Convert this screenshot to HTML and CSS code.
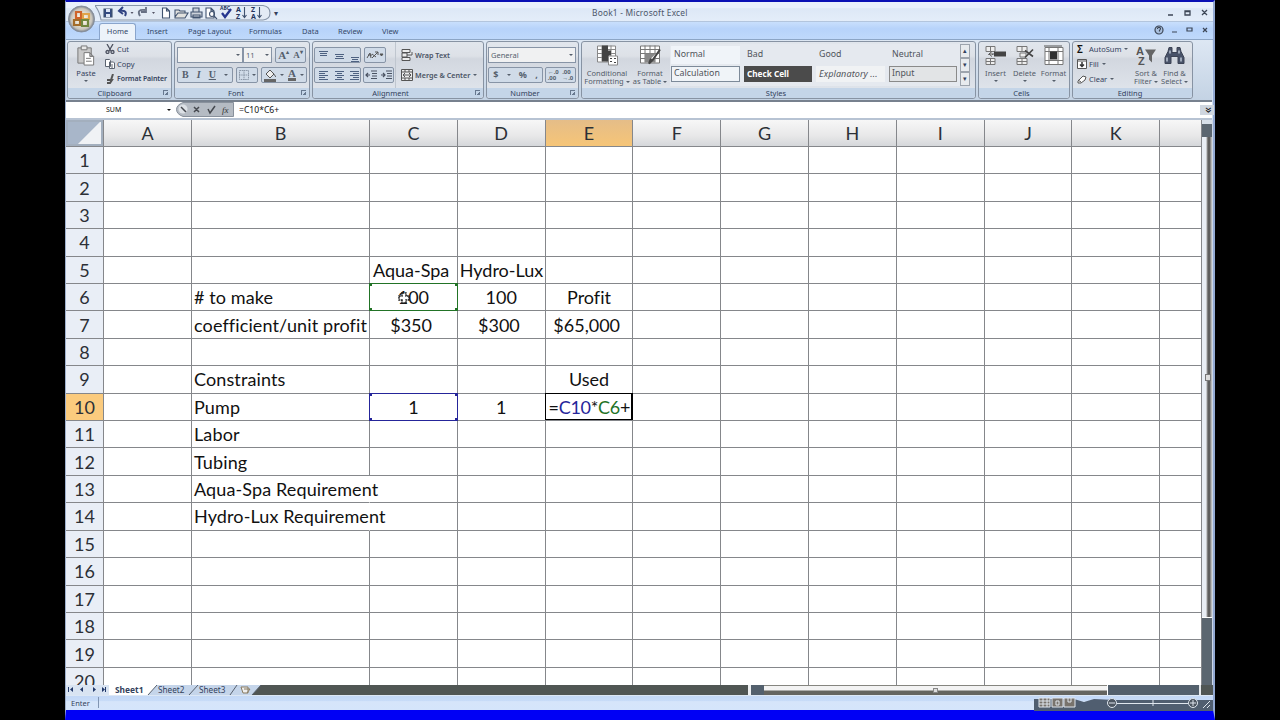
FILE: index.html
```html
<!DOCTYPE html>
<html lang="en">
<head>
    <meta charset="UTF-8">
    <title>Book1 - Microsoft Excel</title>
    <link rel="stylesheet" href="styles.css">
</head>
<body>
    <div class="window">
        <header class="titlebar">
            <div class="quick">
                <svg width="178" height="18" viewBox="0 0 178 18" fill="none" stroke="#40536f" stroke-width="1.1">
                    <path d="M0 1.5h168q7 1 7 7.500t-7 7H6Q5 8 0 1.5" fill="#e3ebf5" stroke="#8795a8"/>
                    <path d="M9 5h8v8H9z" fill="#334a80"/><path d="M11 5h4v3h-4zM11 10h4v3h-4z" fill="#dce5f5" stroke="none"/>
                    <path d="M30 12q3-6-5-5M28 3l-4 4 4 3" stroke="#304383" stroke-width="2"/>
                    <path d="M35.500 8h3L37 10z" fill="#556" stroke="none"/>
                    <path d="M45 12q-4-7 5-6M51 3v5h-5" stroke="#687184" stroke-width="1.800"/>
                    <path d="M57 8h3l-1.500 2z" fill="#556" stroke="none"/>
                    <path d="M67.500 4h4l3 3v7h-7zM71.500 4v3h3" fill="#fff"/>
                    <path d="M80 13V6h4l1 1h5v2h3l-3 5H80zM80 13l3-4h7" fill="#e2e2df"/>
                    <path d="M96 8h11v5H96zM98 8V4h6v4M98 11h7v3h-7z" fill="#ccd2da"/>
                    <path d="M111 4h5l3 3v7h-8zM116 4v3h3" fill="#fff"/><circle cx="117" cy="10" r="2.500"/><path d="M119 12l3 3"/>
                    <path d="M127 9l3 4 6-8" stroke="#26368f" stroke-width="2.300"/>
                    <text x="125" y="6" class="abc">ABC</text>
                    <text x="141" y="8" class="az">A</text><text x="141" y="15" class="az">Z</text><path d="M149.500 3v10M147.500 11l2 2.500 2-2.500"/>
                    <text x="156" y="8" class="az">Z</text><text x="156" y="15" class="az">A</text><path d="M164.500 3v10M162.500 11l2 2.500 2-2.500"/>
                </svg>
                <span class="more">▾</span>
            </div>
            <div class="caption">Book1 - Microsoft Excel</div>
            <div class="controls">
                <svg width="42" height="12" viewBox="0 0 42 12" fill="none" stroke="#3c4656" stroke-width="1.300">
                    <path d="M1 8h5M18 4h5v4h-5zM18 4.500h5M35 3l5 5M40 3l-5 5"/>
                </svg>
            </div>
        </header>

        <nav class="tabs">
            <span class="tab active">Home</span>
            <span class="tab insert">Insert</span>
            <span class="tab layout">Page Layout</span>
            <span class="tab formulas">Formulas</span>
            <span class="tab data">Data</span>
            <span class="tab review">Review</span>
            <span class="tab view">View</span>
            <svg class="doc-controls" width="56" height="12" viewBox="0 0 56 12" fill="none" stroke="#3c4656" stroke-width="1.200">
                <circle cx="5" cy="6" r="4" fill="#a9c0df"/><path d="M3.500 5q0-2 2-1.500t0 3v1M18 8h5M33 4h5v3h-5zM49 4l4 4M53 4l-4 4"/>
            </svg>
            <svg class="office" width="29" height="30" viewBox="0 0 29 30">
                <defs><radialGradient id="orb"><stop offset=".2" stop-color="#fff8e8"/><stop offset=".8" stop-color="#c8c5bd"/><stop offset="1" stop-color="#777e8a"/></radialGradient></defs>
                <circle cx="15.500" cy="15" r="13" fill="url(#orb)" stroke="#87909e"/>
                <g fill="none" stroke-width="2.200"><path d="M10 8h5v6h-5z" stroke="#cf6329"/><path d="M17 10h6v5h-6z" stroke="#e0a44a"/><path d="M8 16h6v5H8z" stroke="#a36c29"/><path d="M16 16h6v6h-6z" stroke="#71873f"/></g>
            </svg>
        </nav>

        <section class="ribbon">
            <div class="group clipboard">
                <div class="body">
                    <div class="big paste">
                        <svg width="20" height="22" viewBox="0 0 20 22" fill="#e8e8e8" stroke="#777" stroke-width="1"><path d="M1.500 3h14v16h-14z" fill="#c9c9c9"/><path d="M5 1h6v4H5z"/><path d="M8 8h6l4 4v9H8zM14 8v4h4M10 14h5M10 17h6" fill="#fff"/></svg>
                        <span>Paste</span><i class="arrow"></i>
                    </div>
                    <div class="list">
                        <span><svg width="10" height="10" viewBox="0 0 10 10" fill="none" stroke="#4d5260" stroke-width="1.300"><path d="M2 0l4 7M8 0L4 7"/><circle cx="2.500" cy="8" r="1.500"/><circle cx="7.500" cy="8" r="1.500"/></svg>Cut</span>
                        <span><svg width="10" height="10" viewBox="0 0 10 10" fill="#fff" stroke="#5c6470"><path d="M.5.5h4l1 1v6h-5zM4.500 3h4l1 1v5.500h-5zM6 6h2M6 8h2"/></svg>Copy</span>
                        <span><svg width="10" height="10" viewBox="0 0 10 10" fill="none" stroke="#555" stroke-width="2"><path d="M8 0L6 6M2 6h5L5 9H2"/></svg><b>Format Painter</b></span>
                    </div>
                </div>
                <div class="label">Clipboard<i class="launch"></i></div>
            </div>

            <div class="group font">
                <div class="body rows">
                    <div class="row">
                        <span class="combo name"><i class="arrow"></i></span><span class="combo size">11<i class="arrow"></i></span>
                        <span class="box grow serif"><em>A<sup>▴</sup></em><em class="small">A<sup>▾</sup></em></span>
                    </div>
                    <div class="row">
                        <span class="box biu serif"><b>B</b><b><i>I</i></b><b><u>U</u></b><i class="arrow"></i></span>
                        <span class="box borders"><svg width="10" height="10" viewBox="0 0 10 10" fill="none" stroke="#8b97a7" stroke-dasharray="1.500 .7"><path d="M.5.5h9v9h-9zM5 0v10M0 5h10"/></svg><i class="arrow"></i></span>
                        <span class="box colors serif"><svg width="12" height="13" viewBox="0 0 12 13"><path d="M2 5l4-4 4 4-4 4z" fill="#eee" stroke="#555"/><path d="M9 4l3 4" stroke="#555"/><path d="M0 10h12v3H0z" fill="#666"/></svg><i class="arrow"></i><em class="under">A</em><i class="arrow"></i></span>
                    </div>
                </div>
                <div class="label">Font<i class="launch"></i></div>
            </div>

            <div class="group alignment">
                <div class="body">
                    <div class="rows">
                        <div class="row">
                            <span class="box three"><svg width="44" height="13" viewBox="0 0 44 13" stroke="#4d6181" fill="none"><path d="M3 2.500h9M4 4.500h7M4 6.500h7M19 5.500h9M20 7.500h7M19 9.500h9M35 8.500h8M36 10.500h6M35 12.500h8"/></svg></span>
                            <span class="box orient"><svg width="18" height="12" viewBox="0 0 18 12" fill="none" stroke="#555"><path d="M1 9l3-5 1 5M2 6h4M6 5l4 3M6 9l6-6M9 3h3v3"/><path d="M14 5h3l-1.500 2z" fill="#555"/></svg></span>
                        </div>
                        <div class="row">
                            <span class="box three"><svg width="44" height="13" viewBox="0 0 44 13" stroke="#4d6181" fill="none"><path d="M3 2.500h9M3 4.500h6M3 6.500h9M3 8.500h6M3 10.500h9M19 2.500h9M21 4.500h5M19 6.500h9M21 8.500h5M19 10.500h9M34 2.500h9M37 4.500h6M34 6.500h9M37 8.500h6M34 10.500h9"/></svg></span>
                            <span class="box indents"><svg width="27" height="12" viewBox="0 0 27 12" stroke="#4a5362" fill="none" stroke-width="1.200"><path d="M6 2h6M7 4.500h5M7 7h5M6 9.500h6M5 6H1M3 4L1 6l2 2M21 2h6M22 4.500h5M22 7h5M21 9.500h6M16 6h4M18 4l2 2-2 2"/></svg></span>
                        </div>
                    </div>
                    <div class="wraps">
                        <span><svg width="12" height="12" viewBox="0 0 12 12" fill="#eee" stroke="#555"><path d="M1 .5h8v3H1zM1 4h5v4H1zM1 8.500h8v3H1zM6 6h5v-3"/></svg><b>Wrap Text</b></span>
                        <span><svg width="12" height="12" viewBox="0 0 12 12" fill="#eee" stroke="#555"><path d="M.5.5h11v11H.5zM.5 3h11M.5 9h11M4 0v3M8 0v3M4 9v3M8 9v3M2 6h8M4 4L2 6l2 2M8 4l2 2-2 2"/></svg><b>Merge &amp; Center</b><i class="arrow"></i></span>
                    </div>
                </div>
                <div class="label">Alignment<i class="launch"></i></div>
            </div>

            <div class="group number">
                <div class="body rows">
                    <div class="row"><span class="combo general">General<i class="arrow"></i></span></div>
                    <div class="row">
                        <span class="box money"><b>$</b><i class="arrow"></i><b>%</b><b>,</b></span>
                        <span class="box decimals"><span>←.0<br>.00</span><span>.00<br>→.0</span></span>
                    </div>
                </div>
                <div class="label">Number<i class="launch"></i></div>
            </div>

            <div class="group styles">
                <div class="body">
                    <div class="big cond">
                        <svg width="21" height="20" viewBox="0 0 21 20" fill="#fff" stroke="#888"><path d="M.5.500h18v16H.5zM.5 4h18M.5 8h18M.5 12h18M5 0v16M10 0v16M14 0v16"/><path d="M5 0h6v5h3v5h-2v6H5z" fill="#444" stroke="none"/><path d="M11.500 10.500h9v9h-9z"/><path d="M13 13h2M17 13h2M13 16h2M17 17h2" stroke="#444"/></svg>
                        <span>Conditional</span><span>Formatting<i class="arrow"></i></span>
                    </div>
                    <div class="big astable">
                        <svg width="21" height="20" viewBox="0 0 21 20" fill="#fff" stroke="#777"><path d="M.5.500h19v17H.5zM.5 4h19M.5 8h19M.5 13h19M5 0v17M10 0v17M15 0v17"/><path d="M5 8h10v9H5z" fill="#888" stroke="none"/><path d="M20 4l-7 10-4 4 2-5" stroke="#444" stroke-width="2"/></svg>
                        <span>Format</span><span>as Table<i class="arrow"></i></span>
                    </div>
                    <div class="gallery">
                        <span class="normal">Normal</span><span>Bad</span><span>Good</span><span>Neutral</span>
                        <span class="calc">Calculation</span><span class="check">Check Cell</span><span class="expl">Explanatory ...</span><span class="input">Input</span>
                    </div>
                    <div class="scroll"><span>▴</span><span>▾</span><span>▾</span></div>
                </div>
                <div class="label">Styles</div>
            </div>

            <div class="group cells">
                <div class="body">
                    <div class="big">
                        <svg width="21" height="20" viewBox="0 0 21 20" fill="#eee" stroke="#777"><path d="M1 1h9v5H1zM5.500 1v5M1 13h9v6H1zM5.500 13v6M1 16h9M3 9h5"/><path d="M9 6h12v5H9z" fill="#444" stroke="none"/><path d="M9 8.500H5M7 6L4 8.500 7 11" stroke="#555"/></svg>
                        <span>Insert</span><i class="arrow"></i>
                    </div>
                    <div class="big">
                        <svg width="19" height="20" viewBox="0 0 19 20" fill="#eee" stroke="#777"><path d="M2 1h10v5H2zM7 1v5M2 13h10v6H2zM7 13v6M2 16h10M5 7.500h6v4H5z"/><path d="M10 5l8 6M18 4l-8 8" stroke="#444" stroke-width="1.600"/></svg>
                        <span>Delete</span><i class="arrow"></i>
                    </div>
                    <div class="big">
                        <svg width="21" height="20" viewBox="0 0 21 20" fill="#fff" stroke="#777"><path d="M2 2h18v17H2zM2 6h18M2 15h18M6 2v17M15 2v17"/><path d="M7 6h7v8H7z" fill="#333" stroke="none"/><path d="M1 .500h18" stroke="#555"/></svg>
                        <span>Format</span><i class="arrow"></i>
                    </div>
                </div>
                <div class="label">Cells</div>
            </div>

            <div class="group editing">
                <div class="body">
                    <div class="list">
                        <span><b class="sigma">Σ</b>AutoSum<i class="arrow"></i></span>
                        <span><svg width="10" height="10" viewBox="0 0 10 10" fill="#fff" stroke="#555"><path d="M.5.500h9v9h-9zM1 2h8"/><path d="M5 3v4M3 5.500l2 2 2-2" stroke="#333" stroke-width="1.500"/></svg>Fill<i class="arrow"></i></span>
                        <span><svg width="10" height="9" viewBox="0 0 10 9" fill="#fff" stroke="#555"><path d="M1 6l5-5 3 1-1 3-4 3H1zM1 5l3 2"/></svg>Clear<i class="arrow"></i></span>
                    </div>
                    <div class="big">
                        <svg width="21" height="20" viewBox="0 0 21 20"><path d="M9 4h11l-4 6v7l-3-3v-4z" fill="#666"/><text x="0" y="9" class="glyph">A</text><text x="2" y="19" class="glyph">Z</text></svg>
                        <span>Sort &amp;</span><span>Filter<i class="arrow"></i></span>
                    </div>
                    <div class="big find">
                        <svg width="21" height="20" viewBox="0 0 21 20" fill="#485268" stroke="#3c4354"><path d="M5 2h3v5h5V2h3l1 4 3 6v6h-6v-7H7v7H1v-6l3-6z"/><path d="M3 12v4M17 12v4M6 5v3M15 5v3" stroke="#bcc6d4" stroke-width="1.500"/></svg>
                        <span>Find &amp;</span><span>Select<i class="arrow"></i></span>
                    </div>
                </div>
                <div class="label">Editing</div>
            </div>
        </section>

        <div class="formula-bar">
            <span class="namebox">SUM</span><i class="arrow dark"></i>
            <span class="fx"><svg width="58" height="15" viewBox="0 0 58 15" fill="none" stroke="#46494f" stroke-width="1.500"><path d="M7 .5h50.500v14H7Q.5 12 .5 7.500T7 .5" fill="#b5bbc3" stroke="#89919c" stroke-width="1"/><circle cx="7" cy="7" r="4.500" fill="#dde1e6" stroke="none"/><path d="M5 5l5 5M18 5l5 5M23 5l-5 5M32 7l2 4 5-7"/><text x="46" y="11" class="fxtext">fx</text></svg></span>
            <span class="formula">=C10*C6+</span>
            <span class="expand">»</span>
        </div>

        <main class="sheet">
            <div class="grid-wrap">
                <table class="grid">
                    <colgroup><col class="c-head"><col class="c-a"><col class="c-b"><col span="9" class="c-n"><col class="c-l"></colgroup>
                    <tbody id="grid"></tbody>
                </table>
            </div>
            <div class="vscroll"><div class="vtop"></div><div class="vthumb"><i></i></div></div>
        </main>

        <footer class="sheet-tabs">
            <span class="nav"><svg width="41" height="9" viewBox="0 0 41 9" fill="#22396b"><path d="M4 4.500L7 2v5zM2 2h1v5H2zM14 4.500L17 2v5zM30 4.500L27 2v5zM39 4.500L36 2v5zM39 2h1v5h-1z"/></svg></span>
            <svg class="stabs" width="155" height="10" viewBox="0 0 155 10">
                <path d="M0 0h152l-9 10H0z" fill="#c5d5ea"/><path d="M0 0h48l-9 10H0z" fill="#fff"/>
                <path d="M48 0l-9 10M89 0l-9 10M128 0l-7 10M152 0l-9 10" stroke="#56606e" fill="none"/>
                <path d="M132 2h7v6h-5zM135 4h6l-3 4" fill="#eee" stroke="#887b60"/>
                <text x="6" y="8" class="st on">Sheet1</text><text x="49" y="8" class="st">Sheet2</text><text x="90" y="8" class="st">Sheet3</text>
            </svg>
            <div class="hscroll"><span class="hleft"></span><span class="hthumb"><i></i></span><span class="hright"></span></div>
        </footer>

        <div class="status">
            <span class="mode">Enter</span>
            <svg class="zoom" width="180" height="15" viewBox="0 0 180 15" fill="none" stroke="#dfe6ee">
                <path d="M1 3h40l10 3 10-3 20 1h99v11H1z" fill="#505e70" stroke="none"/>
                <path d="M6 2h11v9H6zM19 2h11v9H19zM31 2h11v9H31z" fill="#78736d"/><path d="M6 5h11M6 8h11M10 2v9M14 2v9M23 5h3v4h-3zM35 2v4h3V2"/>
                <path d="M84 7.500h71M120 4v6"/><circle cx="79" cy="7" r="4.500" fill="#4c5560"/><path d="M76 7h6"/><circle cx="160" cy="7" r="4.500" fill="#4c5560"/><path d="M157 7h6M160 4v6M170 12l7-7M174 12l3-3" />
            </svg>
        </div>
    </div>
    <script src="grid.js"></script>
</body>
</html>
```
FILE: styles.css
```css
* {
    box-sizing: border-box;
}
body {
    margin: 0;
    height: 720px;
    overflow: hidden;
    background: #000;
    font-family: "Noto Sans", sans-serif;
    font-size: 7.5px;
    line-height: 8px;
    color: #33415c;
}
.window {
    width: 1150px;
    height: 720px;
    margin-left: 65px;
    background: #cfdff2;
    border-top: 2px solid #0a10b4;
    border-bottom: 10px solid #0000f5;
    border-right: 2px solid #93a9d2;
    border-left: 1px solid #9fb1ce;
}
i.arrow {
    display: inline-block;
    border: 2px solid transparent;
    border-top: 2px solid #555e6b;
    border-bottom: 0;
    margin-left: 3px;
    vertical-align: middle;
}

/* title bar */
.titlebar {
    display: flex;
    height: 20px;
    background: linear-gradient(#e9f0fb 0 30%, #dde8f6 35%, #e4edf9);
    border-bottom: 1px solid #b3c5dd;
}
.quick {
    display: flex;
    width: 420px;
    padding: 2px 0 0 29px;
}
.quick svg {
    flex: none;
}
.az {
    font: bold 7px "Noto Sans", sans-serif;
    fill: #26345e;
    stroke: none;
}
.abc {
    font: bold 5px "Noto Sans", sans-serif;
    fill: #26345e;
    stroke: none;
}
.quick .more {
    margin: 5px 0 0 1px;
}
.caption {
    flex: 1;
    padding: 7px 0 0 106px;
    font-size: 8.4px;
    letter-spacing: .2px;
    color: #4c5669;
}
.controls {
    width: 46px;
    padding-top: 5px;
}

/* ribbon tabs */
.tabs {
    position: relative;
    display: flex;
    height: 18px;
    padding: 1px 0 0 33px;
    background: linear-gradient(#c9dffc, #b7d3fa 40%, #bfd9fb);
    border-bottom: 1px solid #8ca5c5;
    color: #344869;
}
.tab {
    padding-top: 4px;
}
.tab.active {
    width: 37px;
    height: 17px;
    text-align: center;
    background: #edf3fa;
    border: 1px solid #8aa5cc;
    border-bottom: 0;
    border-radius: 3px 3px 0 0;
    padding-top: 3px;
}
.insert { width: 41px; margin-left: 11px; }
.layout { width: 61px; }
.formulas { width: 53px; }
.data { width: 36px; }
.review { width: 44px; }
.doc-controls {
    margin-left: auto;
    margin-right: 3px;
    margin-top: 1px;
}
.office {
    position: absolute;
    left: 0;
    top: -18px;
}

/* ribbon groups */
.ribbon {
    display: flex;
    gap: 2px;
    height: 62px;
    padding: 1px 0 1px 1px;
    background: linear-gradient(#dde7f3, #c4d3e4);
    border-bottom: 2px solid #77818e;
    margin-right: 1px;
}
.group {
    display: flex;
    flex-direction: column;
    height: 58px;
    border: 1px solid #8793a3;
    border-radius: 3px;
    background: linear-gradient(#e1e6ed 0, #dde1e7 25%, #d2d7df 30%, #e2e7ee);
}
.clipboard { width: 105px; }
.font { width: 136px; }
.alignment { width: 172px; }
.number { width: 93px; }
.styles { width: 395px; }
.cells { width: 92px; }
.editing { width: 121px; }
.group .body {
    display: flex;
    height: 46px;
}
.group .label {
    position: relative;
    height: 10px;
    padding-right: 5px;
    line-height: 10px;
    text-align: center;
    background: #c4d5e8;
    border-radius: 0 0 3px 3px;
}
.font .label {
    padding-right: 12px;
}
.alignment .label {
    padding-right: 15px;
}
.clipboard .label {
    padding-right: 10px;
}
.number .label {
    padding-right: 15px;
}
.launch {
    position: absolute;
    right: 3px;
    top: 2px;
    width: 5px;
    height: 5px;
    border: 1px solid #67788f;
    border-right: 0;
    border-bottom: 0;
    background: linear-gradient(135deg, transparent 55%, #67788f 56%);
}
.big {
    display: flex;
    flex-direction: column;
    align-items: center;
    width: 28px;
    padding-top: 3px;
    white-space: nowrap;
}
.big svg {
    flex: none;
    height: 21px;
    margin-bottom: 3px;
}
.big > .arrow {
    margin: 3px 0 0;
}
.big span .arrow {
    margin-left: 2px;
}
.paste {
    width: 36px;
}
.list {
    display: flex;
    flex-direction: column;
    gap: 5px;
    padding: 2px 0 0 1px;
    white-space: nowrap;
}
.list > span {
    display: flex;
    align-items: center;
    height: 10px;
}
.list svg, .list .sigma {
    width: 10px;
    margin-right: 2px;
}
.list b {
    font-weight: 600;
    font-size: 7px;
}
.clipboard .list b {
    letter-spacing: -.1px;
}
.list .sigma {
    font-size: 10px;
    color: #111;
}
.rows {
    flex-direction: column;
    gap: 4px;
    padding: 5px 2px 0 2px;
}
.row {
    display: flex;
    height: 16px;
}
.alignment .rows {
    display: flex;
    width: 83px;
    padding: 5px 0 0 1px;
    border-right: 1px solid #bfc6cf;
}
.combo, .box {
    display: flex;
    align-items: center;
    height: 16px;
    border: 1px solid #8794a6;
    color: #555f6d;
}
.combo {
    background: #f0f1f2;
    padding: 0 2px;
}
.combo .arrow {
    margin-left: auto;
}
.box {
    justify-content: space-around;
    border-radius: 2px;
    background: #d0dbe8;
}
.box .arrow {
    margin-left: 0;
}
.serif {
    font-family: "Liberation Serif", serif;
    font-size: 10px;
}
.name { width: 66px; }
.size { width: 29px; }
.grow { width: 31px; margin-left: 3px; }
.box em {
    font-style: normal;
    font-weight: bold;
    font-size: 11px;
}
.box em.small {
    font-size: 9px;
}
.box sup {
    font-size: 6px;
    line-height: 0;
}
.biu { width: 56px; }
.borders { width: 22px; margin-left: 3px; }
.colors { width: 46px; margin-left: 3px; }
.box em.under {
    border-bottom: 3px solid #666;
    line-height: 9px;
}
.three { width: 47px; }
.orient { width: 22px; margin-left: 3px; }
.indents { width: 31px; margin-left: 2px; }
.wraps {
    display: flex;
    flex-direction: column;
    gap: 8px;
    padding: 7px 0 0 5px;
}
.wraps span {
    display: flex;
    align-items: center;
    height: 12px;
    white-space: nowrap;
}
.wraps b {
    margin-left: 2px;
    font-size: 7.2px;
    font-weight: 600;
    color: #4a5364;
}
.number .rows {
    padding-left: 1px;
}
.general { width: 88px; }
.money { width: 55px; font-size: 9px; }
.decimals { width: 31px; margin-left: 2px; }
.decimals span {
    font-size: 6px;
    font-weight: bold;
    line-height: 6px;
}
.cond { width: 50px; }
.astable { width: 36px; }
.cond, .astable, .cells .big, .editing .big {
    color: #535b68;
}
.gallery {
    display: grid;
    grid-template-columns: 69px 68px 69px 68px;
    grid-template-rows: 18px 16px;
    column-gap: 4px;
    row-gap: 2px;
    width: 290px;
    height: 42px;
    margin: 2px 0 0 2px;
    padding: 2px 0 0 1px;
    background: #e5e9ef;
    font-size: 8.8px;
    line-height: 15px;
    color: #50545b;
}
.gallery span {
    padding: 1px 3px 0;
    white-space: nowrap;
}
.gallery .normal { background: #f0f4f9; }
.gallery .calc {
    padding: 0 2px;
    border: 1px solid #7d8a99;
    background: #f0f4f8;
    line-height: 13px;
}
.gallery .check {
    background: #4b4b4b;
    color: #fff;
    font-weight: bold;
    font-size: 8.2px;
    line-height: 13px;
}
.gallery .expl {
    font-style: italic;
    font-size: 9px;
    letter-spacing: .1px;
    line-height: 13px;
    background: #f0f2f4;
}
.gallery .input {
    padding: 0 2px;
    border: 1px solid #8a8a8a;
    line-height: 13px;
    background: #e2e4e6;
}
.scroll {
    display: flex;
    flex-direction: column;
    width: 10px;
    margin-top: 2px;
}
.scroll span {
    height: 14px;
    border: 1px solid #9da4ad;
    line-height: 12px;
    font-size: 7px;
    text-align: center;
    background: #e8ebee;
}
.cells .body { padding-left: 2px; }
.cells .big { width: 29px; }
.editing .list {
    width: 59px;
    padding: 2px 0 0 4px;
}
.editing .find { width: 29px; }
.glyph {
    font: bold 11px "Liberation Sans", sans-serif;
    fill: #555;
}

/* formula bar */
.formula-bar {
    display: flex;
    align-items: center;
    height: 18px;
    margin-right: 1px;
    padding: 0 0 1px;
    background: #fff;
    border-bottom: 2px solid #b7c3d3;
    color: #111;
}
.namebox {
    width: 101px;
    padding-left: 40px;
    font-size: 7px;
}
.arrow.dark {
    border-top-color: #111;
    margin-left: 0;
}
.fx {
    height: 15px;
    margin-left: 5px;
}
.fxtext {
    font: italic 9px "Liberation Serif", serif;
    fill: #333;
    stroke: none;
}
.formula {
    padding-left: 5px;
    font-size: 8.6px;
}
.expand {
    margin-left: auto;
    width: 10px;
    height: 14px;
    font-size: 12px;
    line-height: 10px;
    text-align: center;
    background: #cfd6df;
    transform: rotate(90deg);
}

/* worksheet */
.sheet {
    display: flex;
    height: 565px;
}
.grid-wrap {
    width: 1136px;
    height: 565px;
    overflow: hidden;
    background: #fff;
}
.grid {
    width: 1136px;
    table-layout: fixed;
    border-collapse: separate;
    border-spacing: 0;
    font-family: Lato, sans-serif;
    font-size: 18px;
    font-variant-ligatures: none;
    line-height: 20px;
    color: #111;
}
.c-head { width: 38px; }
.c-a { width: 88px; }
.c-b { width: 178px; }
.c-n { width: 87.8px; }
.c-l { width: 41.8px; }
.grid tr {
    height: 27.42px;
}
.grid tr:first-child {
    height: 27px;
}
.grid th, .grid td {
    padding: 0 2px;
    border-right: 1px solid #85878b;
    border-bottom: 1px solid #85878b;
    font-weight: normal;
    white-space: nowrap;
}
.grid th {
    background: #e9eef6;
    color: #2c3036;
    padding: 0;
}
.grid tr:first-child th {
    background: linear-gradient(#f7f7f7, #e8e8e9 60%, #d5d7da);
}
.grid tr:first-child th.corner {
    background: linear-gradient(135deg, #a8b6c9 56%, #f0f2f5 58%);
    box-shadow: inset 0 0 0 2px #a3afbe;
}
.grid th.on, .grid tr:first-child th.on {
    background: #fbcb7e;
}
.grid tr:first-child th.on {
    background: linear-gradient(#e5bd88, #f6c577);
}
.grid td.text, .grid td.spill {
    letter-spacing: .12px;
}
.grid td.center {
    text-align: center;
}
.grid td.spill {
    border-right-color: transparent;
}
.grid td.ref {
    position: relative;
}
.marquee {
    position: absolute;
    inset: -1px -1px -1px -1px;
    border: 1px solid currentColor;
    background:
        linear-gradient(currentColor, currentColor) 0 0 / 2px 2px no-repeat,
        linear-gradient(currentColor, currentColor) 100% 0 / 2px 2px no-repeat,
        linear-gradient(currentColor, currentColor) 0 100% / 2px 2px no-repeat,
        linear-gradient(currentColor, currentColor) 100% 100% / 2px 2px no-repeat;
}
.marquee.green, .green { color: #227326; }
.marquee.blue, .blue { color: #25259a; }
.grid td.edit {
    position: relative;
    padding: 0 0 0 3px;
    letter-spacing: -.3px;
}
.edit::after {
    content: "";
    position: absolute;
    inset: -1px -1px 0 -1px;
    border: 1px solid #000;
    border-right-width: 2px;
}
.cursor {
    position: absolute;
    left: 28px;
    top: 8px;
}

/* scroll bars and sheet tabs */
.vscroll {
    flex: 1;
    background: #5b6670;
    border-right: 1px solid #cad5e6;
}
.vtop {
    height: 17px;
    border-top: 4px solid #d7dfe8;
}
.vthumb {
    display: flex;
    align-items: center;
    height: 481px;
    background: linear-gradient(90deg, #e9eef5 0 4px, #a2a2a2 5px, #5e5e5e 6px 8px, #b6b6b6 9px);
    border-bottom: 1px solid #fff;
}
.vthumb i {
    width: 6px;
    height: 7px;
    margin-left: 3px;
    border: 1px solid #777;
    background: #ddd;
}
.sheet-tabs {
    display: flex;
    height: 11px;
    background: #505654;
    border-bottom: 1px solid #dce7f4;
}
.nav {
    width: 43px;
    background: #d9e4f2;
}
.st {
    font: 8.2px "Noto Sans", sans-serif;
    fill: #33415c;
}
.st.on {
    font-weight: bold;
    font-size: 8.4px;
}
.hscroll {
    display: flex;
    margin-left: auto;
    width: 465px;
}
.hleft {
    width: 16px;
    border-left: 3px solid #eef0f2;
    background: #53606d;
}
.hthumb {
    display: flex;
    justify-content: center;
    width: 344px;
    border-right: 1px solid #fff;
    background: linear-gradient(#85857f 0 1px, #f3f3f3 1px 5px, #64645f 6px);
}
.hthumb i {
    width: 5px;
    height: 5px;
    margin-top: 3px;
    background: #ddd;
    border: 1px solid #888;
}
.hright {
    flex: 1;
    margin-right: 12px;
    background: #53606d;
    border-right: 2px solid #e5e8eb;
}
.status {
    display: flex;
    justify-content: space-between;
    height: 14px;
    background: linear-gradient(#c3d8f6, #c8dcf8 35%, #d6e5fa 40%, #d5e5fb);
}
.mode {
    width: 33px;
    height: 11px;
    margin-top: 1px;
    padding: 2px 0 0 5px;
    border-right: 1px solid #8195b3;
}
```
FILE: grid.js
```js
const columns = ['A', 'B', 'C', 'D', 'E', 'F', 'G', 'H', 'I', 'J', 'K', ''];

const cells = {
    C5: 'Aqua-Spa&nbsp;', D5: 'Hydro-Lux',
    B6: '# to make', C6: '100', D6: '100', E6: 'Profit',
    B7: 'coefficient/unit profit', C7: '$350&nbsp;', D7: '$300&nbsp;', E7: '$65,000&nbsp;',
    B9: 'Constraints', E9: 'Used',
    B10: 'Pump', C10: '1', D10: '1',
    E10: '=<span class="blue">C10</span>*<span class="green">C6</span>+',
    B11: 'Labor', B12: 'Tubing',
    B13: 'Aqua-Spa Requirement', B14: 'Hydro-Lux Requirement'
};

const cursor = '<svg class="cursor" width="13" height="13" viewBox="0 0 13 13"><path d="M4 1h4v3h3v4H8v3H4V8H1V4h3z" fill="#fff" stroke="#222" stroke-width="1.500" stroke-dasharray="2 .6"/></svg>';

let html = '<tr><th class="corner"></th>';
columns.forEach(c => {
    html += `<th class="${c === 'E' ? 'on' : ''}">${c}</th>`;
});
html += '</tr>';

for (let r = 1; r <= 20; r++) {
    html += `<tr><th class="${r === 10 ? 'on' : ''}">${r}</th>`;
    columns.forEach(c => {
        const id = c + r;
        let cls = c === 'B' ? 'text' : 'center';
        let extra = '';
        if (id === 'B13' || id === 'B14') cls = 'spill';
        if (id === 'C6') { cls += ' ref'; extra = '<span class="marquee green"></span>' + cursor; }
        if (id === 'C10') { cls += ' ref'; extra = '<span class="marquee blue"></span>'; }
        if (id === 'E10') cls = 'edit';
        html += `<td class="${cls}">${cells[id] || ''}${extra}</td>`;
    });
    html += '</tr>';
}

document.getElementById('grid').innerHTML = html;
```
